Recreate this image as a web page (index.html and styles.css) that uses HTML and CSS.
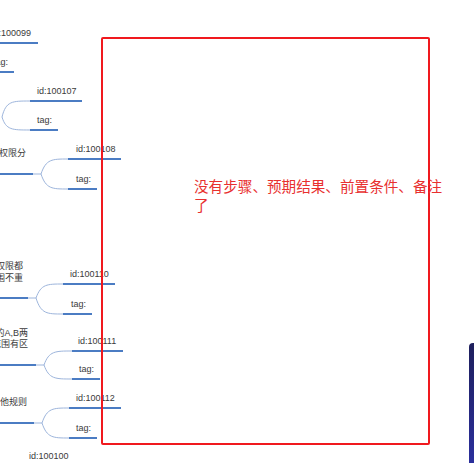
FILE: index.html
```html
<!DOCTYPE html>
<html lang="zh-CN">
<head>
    <meta charset="UTF-8">
    <title>用例脑图</title>
    <link rel="stylesheet" href="styles.css">
</head>
<body>
    <div class="canvas">
        <svg class="mindmap" width="474" height="463" viewBox="0 0 474 463">
            <!-- top node, mostly scrolled out -->
            <text class="label" x="31" y="36" text-anchor="end">id:100099</text>
            <line class="edge" x1="-10" y1="43" x2="38" y2="43"/>
            <text class="label" x="8" y="65" text-anchor="end">tag:</text>
            <line class="edge" x1="-10" y1="72" x2="14" y2="72"/>

            <!-- 100107 -->
            <path class="link" d="M2 117 C6 101, 12 101, 30 101"/>
            <path class="link" d="M2 117 C6 130, 12 130, 30 130"/>
            <line class="edge" x1="30" y1="101" x2="82" y2="101"/>
            <text class="label" x="37" y="94">id:100107</text>
            <line class="edge" x1="30" y1="130" x2="58" y2="130"/>
            <text class="label" x="37" y="123">tag:</text>

            <!-- 100108 -->
            <text class="label" x="26" y="156" text-anchor="end">有权限分</text>
            <line class="edge" x1="-10" y1="174" x2="33" y2="174"/>
            <line class="link" x1="33" y1="174" x2="41" y2="174"/>
            <path class="link" d="M41 174 C46 159, 52 159, 68 159"/>
            <path class="link" d="M41 174 C46 189, 52 189, 68 189"/>
            <line class="edge" x1="68" y1="159" x2="121" y2="159"/>
            <text class="label" x="76" y="152">id:100108</text>
            <line class="edge" x1="68" y1="189" x2="97" y2="189"/>
            <text class="label" x="76" y="182">tag:</text>

            <!-- 100110 -->
            <text class="label" x="23" y="269" text-anchor="end">权限都</text>
            <text class="label" x="23" y="281" text-anchor="end">范围不重</text>
            <line class="edge" x1="-10" y1="298" x2="28" y2="298"/>
            <line class="link" x1="28" y1="298" x2="36" y2="298"/>
            <path class="link" d="M36 298 C41 284, 47 284, 63 284"/>
            <path class="link" d="M36 298 C41 314, 47 314, 63 314"/>
            <line class="edge" x1="63" y1="284" x2="115" y2="284"/>
            <text class="label" x="70" y="277">id:100110</text>
            <line class="edge" x1="63" y1="314" x2="92" y2="314"/>
            <text class="label" x="71" y="307">tag:</text>

            <!-- 100111 -->
            <text class="label" x="28" y="336" text-anchor="end">的A,B两</text>
            <text class="label" x="28" y="347" text-anchor="end">范围有区</text>
            <line class="edge" x1="-10" y1="365" x2="36" y2="365"/>
            <line class="link" x1="36" y1="365" x2="44" y2="365"/>
            <path class="link" d="M44 365 C49 351, 55 351, 72 351"/>
            <path class="link" d="M44 365 C49 379, 55 379, 72 379"/>
            <line class="edge" x1="72" y1="351" x2="123" y2="351"/>
            <text class="label" x="78" y="344">id:100111</text>
            <line class="edge" x1="72" y1="379" x2="100" y2="379"/>
            <text class="label" x="79" y="372">tag:</text>

            <!-- 100112 -->
            <text class="label" x="27" y="405" text-anchor="end">其他规则</text>
            <line class="edge" x1="-10" y1="423" x2="34" y2="423"/>
            <line class="link" x1="34" y1="423" x2="42" y2="423"/>
            <path class="link" d="M42 423 C47 408, 53 408, 69 408"/>
            <path class="link" d="M42 423 C47 438, 53 438, 69 438"/>
            <line class="edge" x1="69" y1="408" x2="121" y2="408"/>
            <text class="label" x="76" y="401">id:100112</text>
            <line class="edge" x1="69" y1="438" x2="97" y2="438"/>
            <text class="label" x="76" y="431">tag:</text>

            <text class="label" x="29" y="459">id:100100</text>
        </svg>

        <div class="note-box">
            <p class="note-text">没有步骤、预期结果、前置条件、备注了</p>
        </div>

        <div class="side-widget"></div>
    </div>
</body>
</html>
```

FILE: styles.css
```css
html, body {
    margin: 0;
    padding: 0;
    background: #fff;
    overflow: hidden;
}
.canvas {
    position: relative;
    width: 474px;
    height: 463px;
    overflow: hidden;
    font-family: "Liberation Sans", "Noto Sans CJK SC", sans-serif;
}
.mindmap {
    display: block;
}
.label {
    font-family: "Liberation Sans", "Noto Sans CJK SC", sans-serif;
    font-size: 9px;
    fill: #3a3a3a;
}
.edge {
    stroke: #4b7cc3;
    stroke-width: 2;
}
.link {
    fill: none;
    stroke: #9db5dc;
    stroke-width: 1;
}
.note-box {
    position: absolute;
    left: 101px;
    top: 37px;
    width: 325px;
    height: 404px;
    border: 2px solid #f0191e;
    border-radius: 2px;
}
.note-text {
    margin: 0;
    position: absolute;
    left: 91px;
    top: 137px;
    width: 252px;
    font-family: "Noto Sans CJK SC", sans-serif;
    font-size: 14.6px;
    line-height: 19px;
    color: #e8302f;
}
.side-widget {
    position: absolute;
    right: 0;
    top: 343px;
    width: 5px;
    height: 120px;
    border-top-left-radius: 4px;
    background: linear-gradient(#1e1f5c, #2b2f9c);
}
```
